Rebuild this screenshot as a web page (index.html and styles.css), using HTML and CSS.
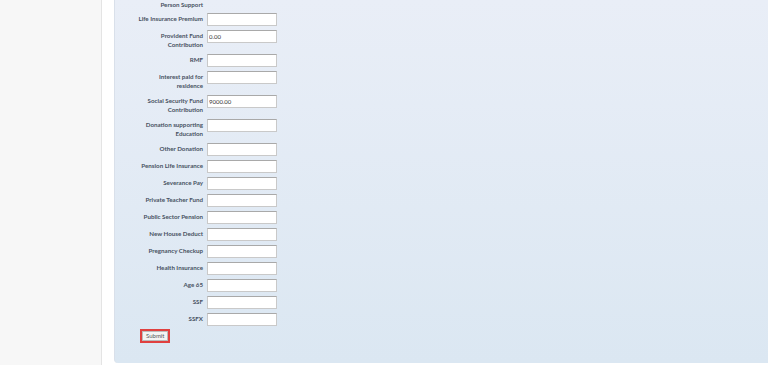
FILE: index.html
```html
<!DOCTYPE html>
<html lang="en">
<head>
    <meta charset="UTF-8">
    <title>Tax Deductions</title>
    <meta name="viewport" content="width=device-width, initial-scale=1.0">
    <link rel="stylesheet" href="styles.css">
</head>
<body>
    <div class="sidebar"></div>
    <div class="main">
        <div class="panel">
            <form class="deduct-form">
                <div class="row">
                    <label class="label tail">Person Support</label>
                </div>
                <div class="row">
                    <label class="label" for="lifeIns">Life Insurance Premium</label>
                    <input type="text" id="lifeIns">
                </div>
                <div class="row">
                    <label class="label" for="provident">Provident Fund Contribution</label>
                    <input type="text" id="provident" value="0.00">
                </div>
                <div class="row">
                    <label class="label" for="rmf">RMF</label>
                    <input type="text" id="rmf">
                </div>
                <div class="row">
                    <label class="label" for="interest">Interest paid for residence</label>
                    <input type="text" id="interest">
                </div>
                <div class="row">
                    <label class="label" for="socialSec">Social Security Fund Contribution</label>
                    <input type="text" id="socialSec" value="9000.00">
                </div>
                <div class="row">
                    <label class="label" for="donationEdu">Donation supporting Education</label>
                    <input type="text" id="donationEdu">
                </div>
                <div class="row">
                    <label class="label" for="otherDonation">Other Donation</label>
                    <input type="text" id="otherDonation">
                </div>
                <div class="row">
                    <label class="label" for="pensionLife">Pension Life Insurance</label>
                    <input type="text" id="pensionLife">
                </div>
                <div class="row">
                    <label class="label" for="severance">Severance Pay</label>
                    <input type="text" id="severance">
                </div>
                <div class="row">
                    <label class="label" for="teacherFund">Private Teacher Fund</label>
                    <input type="text" id="teacherFund">
                </div>
                <div class="row">
                    <label class="label" for="publicPension">Public Sector Pension</label>
                    <input type="text" id="publicPension">
                </div>
                <div class="row">
                    <label class="label" for="newHouse">New House Deduct</label>
                    <input type="text" id="newHouse">
                </div>
                <div class="row">
                    <label class="label" for="pregnancy">Pregnancy Checkup</label>
                    <input type="text" id="pregnancy">
                </div>
                <div class="row">
                    <label class="label" for="health">Health Insurance</label>
                    <input type="text" id="health">
                </div>
                <div class="row">
                    <label class="label" for="age65">Age 65</label>
                    <input type="text" id="age65">
                </div>
                <div class="row">
                    <label class="label" for="ssf">SSF</label>
                    <input type="text" id="ssf">
                </div>
                <div class="row">
                    <label class="label" for="ssfx">SSFX</label>
                    <input type="text" id="ssfx">
                </div>
                <div class="actions">
                    <button type="submit" class="submit-btn">Submit</button>
                </div>
            </form>
        </div>
    </div>
</body>
</html>
```

FILE: styles.css
```css
html, body { height: 100%; }
body { margin: 0; display: flex; background: #fff; font-family: Lato, 'Open Sans', Arial, sans-serif; overflow: hidden; }
.sidebar { width: 101px; flex: none; background: #f7f7f7; border-right: 1px solid #e4e4e4; }
.main { flex: 1; padding-left: 12px; }
.panel { height: 363px; background: linear-gradient(#e9eef7, #dbe7f2); border-left: 1px solid #d9e0ea; border-radius: 0 0 0 4px; box-sizing: border-box; }
.deduct-form { padding-left: 22px; }
.row { display: flex; align-items: flex-start; gap: 4px; margin-bottom: 4px; }
.label { width: 66px; flex: none; text-align: right; font-size: 6.2px; font-weight: bold; color: #485262; line-height: 8.5px; padding: 2px 0 1px; }
.label.tail { padding: 1px 0 0; height: 8px; }
input[type="text"] { width: 70px; height: 13px; box-sizing: border-box; margin: 0; padding: 0 1px; border: 1px solid #c9c9c9; border-top-color: #a9a9a9; background: #fff; font-family: Lato, Arial, sans-serif; font-size: 6px; color: #333; }
.actions { display: flex; padding-left: 5px; }
.submit-btn { margin: 1px 0 0; padding: 0 3px; height: 10px; line-height: 8px; font-family: Lato, Arial, sans-serif; font-size: 6px; color: #555; background: #f3f3f3; border: 1px solid #bbb; outline: 2px solid #e0403f; outline-offset: 0; }
```
